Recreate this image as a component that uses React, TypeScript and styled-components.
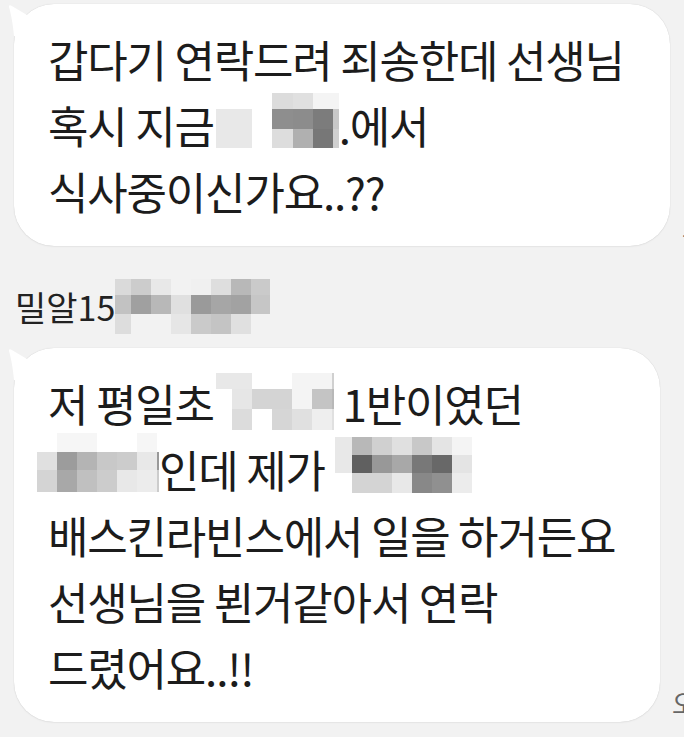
import React from "react";
import styled, { createGlobalStyle } from "styled-components";

const GlobalStyle = createGlobalStyle`
  html, body {
    margin: 0;
    padding: 0;
    background: #f2f2f2;
    overflow: hidden;
  }
  body {
    font-family: "Noto Sans CJK KR", Roboto, sans-serif;
    color: #1c1c1c;
  }
`;

const StyledChat = styled.div`
  width: 684px;
  height: 737px;
  overflow: hidden;
  box-sizing: border-box;
  padding: 4px 0 0 14px;
  display: flex;
  flex-direction: column;
`;

const MessageRow = styled.div`
  display: flex;
  align-items: flex-end;
  gap: 12px;
`;

const Bubble = styled.div<{ $width: number }>`
  position: relative;
  flex-shrink: 0;
  width: ${(p) => p.$width}px;
  box-sizing: border-box;
  padding: 22px 20px 22px 34px;
  background: #fff;
  border-radius: 40px;
  box-shadow: 0 0 1px rgba(0, 0, 0, 0.2), 0 1px 2px rgba(0, 0, 0, 0.04);

  /* the little spike at the top-left corner */
  &::before {
    content: "";
    position: absolute;
    left: -6px;
    top: 0;
    width: 26px;
    height: 32px;
    background: #fff;
    clip-path: path("M6 32 C5 20 3 10 1 3 Q0.5 0.5 3 1.5 L24 14 L24 32 Z");
  }
`;

const Line = styled.div`
  height: 66px;
  line-height: 66px;
  font-size: 44px;
  letter-spacing: -1.2px;
  white-space: nowrap;
`;

const Time = styled.span`
  flex-shrink: 0;
  white-space: nowrap;
  font-size: 26px;
  line-height: 26px;
  color: #666;
  margin-bottom: 6px;
`;

const Sender = styled.div`
  display: flex;
  align-items: center;
  margin: 33px 0 14px 1px;
  font-size: 34px;
  line-height: 34px;
  color: #222;
`;

// inline-block + overflow hidden: baseline is the bottom edge, so the drop is exact
const MosaicBox = styled.span<{ $drop: number; $shift: number; $inline: boolean }>`
  display: inline-block;
  overflow: hidden;
  vertical-align: -${(p) => p.$drop}px;
  margin: ${(p) => (p.$inline ? "-24px" : "0")} 0 0 ${(p) => p.$shift}px;
  letter-spacing: 0;
`;

const MosaicGrid = styled.span<{ $cols: string; $rows: string }>`
  display: grid;
  grid-template-columns: ${(p) => p.$cols};
  grid-template-rows: ${(p) => p.$rows};
`;

const Cell = styled.span<{ $tone: string }>`
  background: ${(p) => (p.$tone ? `#${p.$tone}${p.$tone}${p.$tone}` : "transparent")};
`;

type MosaicData = { cols: number[]; rows: number[]; cells: string[][] };

const Mosaic = ({
  data,
  drop = 0,
  shift = 2,
  inline = true,
}: {
  data: MosaicData;
  drop?: number;
  shift?: number;
  inline?: boolean;
}) => (
  <MosaicBox $drop={drop} $shift={shift} $inline={inline}>
    <MosaicGrid
      $cols={data.cols.map((c) => c + "px").join(" ")}
      $rows={data.rows.map((r) => r + "px").join(" ")}
    >
      {data.cells.map((row, i) =>
        row.map((tone, j) => <Cell key={i + "-" + j} $tone={tone} />)
      )}
    </MosaicGrid>
  </MosaicBox>
);

const placeMosaic: MosaicData = {
  cols: [36, 20, 21, 20, 20, 6],
  rows: [16, 20, 19],
  cells: [
    ["", "", "dc", "e0", "f4", "f4"],
    ["e8", "", "8e", "8c", "7c", "c8"],
    ["e8", "", "dd", "b0", "77", "d0"],
  ],
};

const nameMosaic: MosaicData = {
  cols: [16, 20, 20, 20, 20, 20, 20, 19],
  rows: [16, 19, 20],
  cells: [
    ["da", "cc", "e8", "", "f0", "de", "b8", "ca"],
    ["c2", "a0", "b8", "e0", "9a", "a6", "a2", "c6"],
    ["dd", "", "", "e6", "ca", "c4", "e0", ""],
  ],
};

const classMosaic: MosaicData = {
  cols: [16, 20, 20, 20, 20, 20, 2],
  rows: [16, 20, 21],
  cells: [
    ["e8", "e8", "", "", "f4", "f4", "d0"],
    ["", "e6", "d4", "d4", "f4", "c4", "b8"],
    ["", "dc", "", "d6", "e0", "ee", "e0"],
  ],
};

const studentMosaic: MosaicData = {
  cols: [20, 20, 20, 20, 20, 20, 2],
  rows: [19, 18, 22],
  cells: [
    ["", "f6", "f6", "", "", "f6", ""],
    ["e0", "9c", "b4", "c8", "cc", "e8", "99"],
    ["d4", "a8", "c0", "cc", "e8", "ec", "cc"],
  ],
};

const storeMosaic: MosaicData = {
  cols: [17, 20, 20, 20, 20, 20, 20],
  rows: [18, 18, 20],
  cells: [
    ["e8", "b8", "d0", "e0", "c8", "e4", "f4"],
    ["e8", "60", "98", "a8", "78", "68", "e4"],
    ["", "d4", "d4", "e8", "88", "90", "ec"],
  ],
};

const App = () => {
  return (
    <>
      <GlobalStyle />
      <StyledChat>
        <MessageRow>
          <Bubble $width={656}>
            <Line>갑다기 연락드려 죄송한데 선생님</Line>
            <Line>
              혹시 지금
              <Mosaic data={placeMosaic} drop={4} />
              .에서
            </Line>
            <Line>식사중이신가요..??</Line>
          </Bubble>
          <Time>오후 2:41</Time>
        </MessageRow>

        <Sender>
          밀알15
          <Mosaic data={nameMosaic} shift={0} inline={false} />
        </Sender>

        <MessageRow>
          <Bubble $width={646}>
            <Line>
              저 평일초
              <Mosaic data={classMosaic} drop={8} /> 1반이였던
            </Line>
            <Line>
              <Mosaic data={studentMosaic} drop={4} shift={-11} />
              인데 제가 <Mosaic data={storeMosaic} drop={5} />
            </Line>
            <Line>배스킨라빈스에서 일을 하거든요</Line>
            <Line>선생님을 뵌거같아서 연락</Line>
            <Line>드렸어요..!!</Line>
          </Bubble>
          <Time>오후 2:42</Time>
        </MessageRow>
      </StyledChat>
    </>
  );
};

export default App;
